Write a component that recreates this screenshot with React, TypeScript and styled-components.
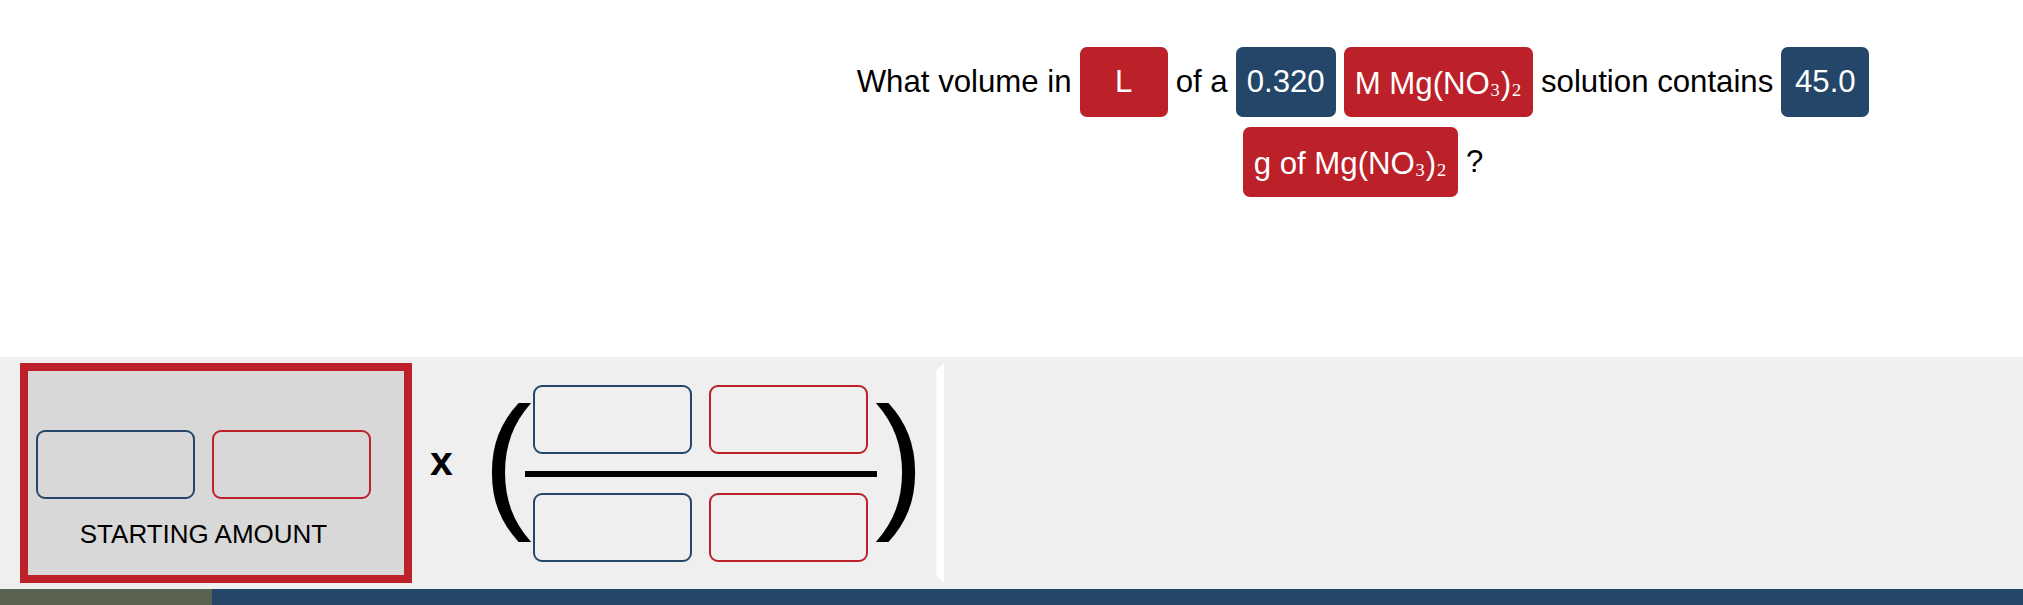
import React from 'react';
import styled, { createGlobalStyle } from 'styled-components';

const RED = '#bc2029';
const BLUE = '#234669';

type Tone = 'red' | 'blue';

const GlobalStyle = createGlobalStyle`
  html, body {
    margin: 0;
    padding: 0;
    background: #fff;
  }
  body {
    font-family: "Liberation Sans", Arial, sans-serif;
    color: #000;
  }
`;

const Page = styled.div`
  width: 2023px;
  height: 605px;
  display: flex;
  flex-direction: column;
  overflow: hidden;
`;

const Top = styled.div`
  height: 357px;
  box-sizing: border-box;
  padding: 47px 90px 0 793px;
  display: flex;
`;

const Question = styled.div`
  flex: 1;
  display: flex;
  flex-wrap: wrap;
  justify-content: center;
  align-items: center;
  align-content: flex-start;
  gap: 10px 8px;
  font-size: 31.2px;
`;

const Word = styled.span`
  white-space: nowrap;
`;

const Chip = styled.span<{ $tone: Tone }>`
  display: inline-flex;
  align-items: center;
  justify-content: center;
  height: 70px;
  min-width: 88px;
  box-sizing: border-box;
  padding: 0 11px;
  border-radius: 7px;
  background: ${(p) => (p.$tone === 'red' ? RED : BLUE)};
  color: #fff;
  white-space: nowrap;
`;

const Sub = styled.span`
  font-family: "Liberation Serif", "DejaVu Serif", serif;
  vertical-align: 4px;
`;

const Workspace = styled.div`
  height: 232px;
  background: #efefef;
  display: flex;
  align-items: center;
  padding-left: 20px;
`;

const StartBox = styled.div`
  width: 392px;
  height: 220px;
  box-sizing: border-box;
  border: 8px solid ${RED};
  background: #d8d8d8;
  padding: 59px 0 0 8px;
  display: flex;
`;

const StartInner = styled.div`
  display: flex;
  flex-direction: column;
  align-items: center;
`;

const SlotRow = styled.div`
  display: flex;
  gap: 17px;
`;

const Slot = styled.div<{ $tone: Tone }>`
  width: 159px;
  height: 69px;
  box-sizing: border-box;
  border: 2px solid ${(p) => (p.$tone === 'red' ? RED : BLUE)};
  border-radius: 9px;
`;

const StartLabel = styled.div`
  margin-top: 20px;
  font-size: 26px;
  white-space: nowrap;
`;

const Times = styled.span`
  margin-left: 18px;
  margin-bottom: 24px;
  font-size: 41px;
  font-weight: bold;
`;

const Paren = styled.span<{ $side: 'left' | 'right' }>`
  font-size: 148px;
  line-height: 1;
  margin-bottom: 26px;
  margin-left: ${(p) => (p.$side === 'left' ? '30px' : '-2px')};
`;

const Fraction = styled.div`
  width: 352px;
  box-sizing: border-box;
  padding: 0 8px;
  margin-left: -7px;
  display: flex;
  flex-direction: column;
`;

const FractionBar = styled.div`
  height: 6px;
  background: #000;
  margin: 17px -8px 16px;
`;

const Divider = styled.div`
  width: 8px;
  height: 220px;
  margin-left: 12px;
  background: #fff;
  clip-path: polygon(0 7px, 100% 0, 100% 100%, 0 calc(100% - 7px));
`;

const BottomBar = styled.div`
  height: 16px;
  display: flex;
`;

const BarSegment = styled.div<{ $color: string; $width?: number }>`
  background: ${(p) => p.$color};
  ${(p) => (p.$width ? `width: ${p.$width}px;` : 'flex: 1;')}
`;

const App: React.FC = () => {
  return (
    <Page>
      <GlobalStyle />
      <Top>
        <Question>
          <Word>What volume in</Word>
          <Chip $tone="red">L</Chip>
          <Word>of a</Word>
          <Chip $tone="blue">0.320</Chip>
          <Chip $tone="red">
            <span>
              M Mg(NO<Sub>₃</Sub>)<Sub>₂</Sub>
            </span>
          </Chip>
          <Word>solution contains</Word>
          <Chip $tone="blue">45.0</Chip>
          <Chip $tone="red">
            <span>
              g of Mg(NO<Sub>₃</Sub>)<Sub>₂</Sub>
            </span>
          </Chip>
          <Word>?</Word>
        </Question>
      </Top>
      <Workspace>
        <StartBox>
          <StartInner>
            <SlotRow>
              <Slot $tone="blue" />
              <Slot $tone="red" />
            </SlotRow>
            <StartLabel>STARTING AMOUNT</StartLabel>
          </StartInner>
        </StartBox>
        <Times>x</Times>
        <Paren $side="left">(</Paren>
        <Fraction>
          <SlotRow>
            <Slot $tone="blue" />
            <Slot $tone="red" />
          </SlotRow>
          <FractionBar />
          <SlotRow>
            <Slot $tone="blue" />
            <Slot $tone="red" />
          </SlotRow>
        </Fraction>
        <Paren $side="right">)</Paren>
        <Divider />
      </Workspace>
      <BottomBar>
        <BarSegment $color="#5a6350" $width={212} />
        <BarSegment $color={BLUE} />
      </BottomBar>
    </Page>
  );
};

export default App;
